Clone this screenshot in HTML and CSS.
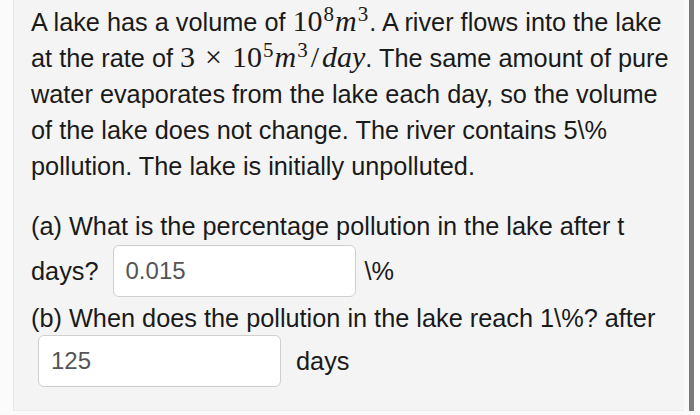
FILE: index.html
```html
<!DOCTYPE html>
<html>
<head>
<meta charset="utf-8">
<link rel="stylesheet" href="styles.css">
</head>
<body>
<div class="frame">
  <div class="gutter"></div>
  <div class="panel">
    <p class="para">A lake has a volume of <span class="m"><span class="n">10</span><sup>8</sup><i>m</i><sup>3</sup></span>. A river flows into the lake<br>at the rate of <span class="m"><span class="n">3</span><span class="op">×</span><span class="n">10</span><sup>5</sup><i>m</i><sup>3</sup><span class="sl">/</span><i>day</i></span>. The same amount of pure<br>water evaporates from the lake each day, so the volume<br>of the lake does not change. The river contains 5\%<br>pollution. The lake is initially unpolluted.</p>
    <p class="para q">(a) What is the percentage pollution in the lake after t</p>
    <div class="row">
      <span>days?</span>
      <span class="field">0.015</span>
      <span>\%</span>
    </div>
    <p class="para qb">(b) When does the pollution in the lake reach 1\%? after</p>
    <div class="row row-b">
      <span class="field">125</span>
      <span>days</span>
    </div>
  </div>
  <div class="edge"></div>
  <div class="bar"></div>
  <div class="outer"></div>
</div>
</body>
</html>
```

FILE: styles.css
```css
html, body {
  margin: 0;
  padding: 0;
  background: #fafafa;
}
body {
  width: 700px;
  height: 415px;
  overflow: hidden;
  font-family: "Liberation Sans", Arial, sans-serif;
  color: #1a1a1a;
}
.frame {
  display: flex;
  height: 411px;
}
.gutter {
  width: 13px;
  background: #fbfbfb;
}
.panel {
  flex: 1;
  background: #f4f4f4;
  border-left: 1px solid #e8e8e8;
  border-bottom: 1px solid #ececec;
  padding: 4px 0 0 17px;
  font-size: 25.3px;
  line-height: 36px;
}
.para {
  margin: 0;
}
.q {
  margin-top: 24px;
}
.qb {
  margin-top: 3px;
}
.m {
  font-family: "Liberation Serif", "Times New Roman", serif;
  font-size: 30px;
  line-height: 1;
}
.m i {
  font-style: italic;
}
.m sup {
  font-size: 21px;
  vertical-align: 0.5em;
  line-height: 0;
  margin: 0 1px;
}
.op {
  margin: 0 10px;
}
.sl {
  margin: 0 3px 0 2px;
}
.row {
  display: flex;
  align-items: center;
  height: 52px;
  margin-top: 1px;
}
.row > span:first-child {
  margin-right: 14px;
}
.row .field + span {
  margin-left: 9px;
}
.row-b {
  margin-top: -1px;
  padding-left: 7px;
}
.row-b > span:first-child {
  margin-right: 15px;
}
.row-b .field + span {
  margin-left: 0;
}
.field {
  box-sizing: border-box;
  width: 243px;
  height: 52px;
  background: #fff;
  border: 1px solid #cfcfcf;
  border-radius: 6px;
  padding: 0 12px;
  color: #555;
  font-size: 24px;
  line-height: 50px;
}
.edge {
  width: 5px;
  background: #fafafa;
}
.bar {
  width: 5px;
  background: #7a7a7a;
}
.outer {
  width: 6px;
  background: #fff;
}
```
